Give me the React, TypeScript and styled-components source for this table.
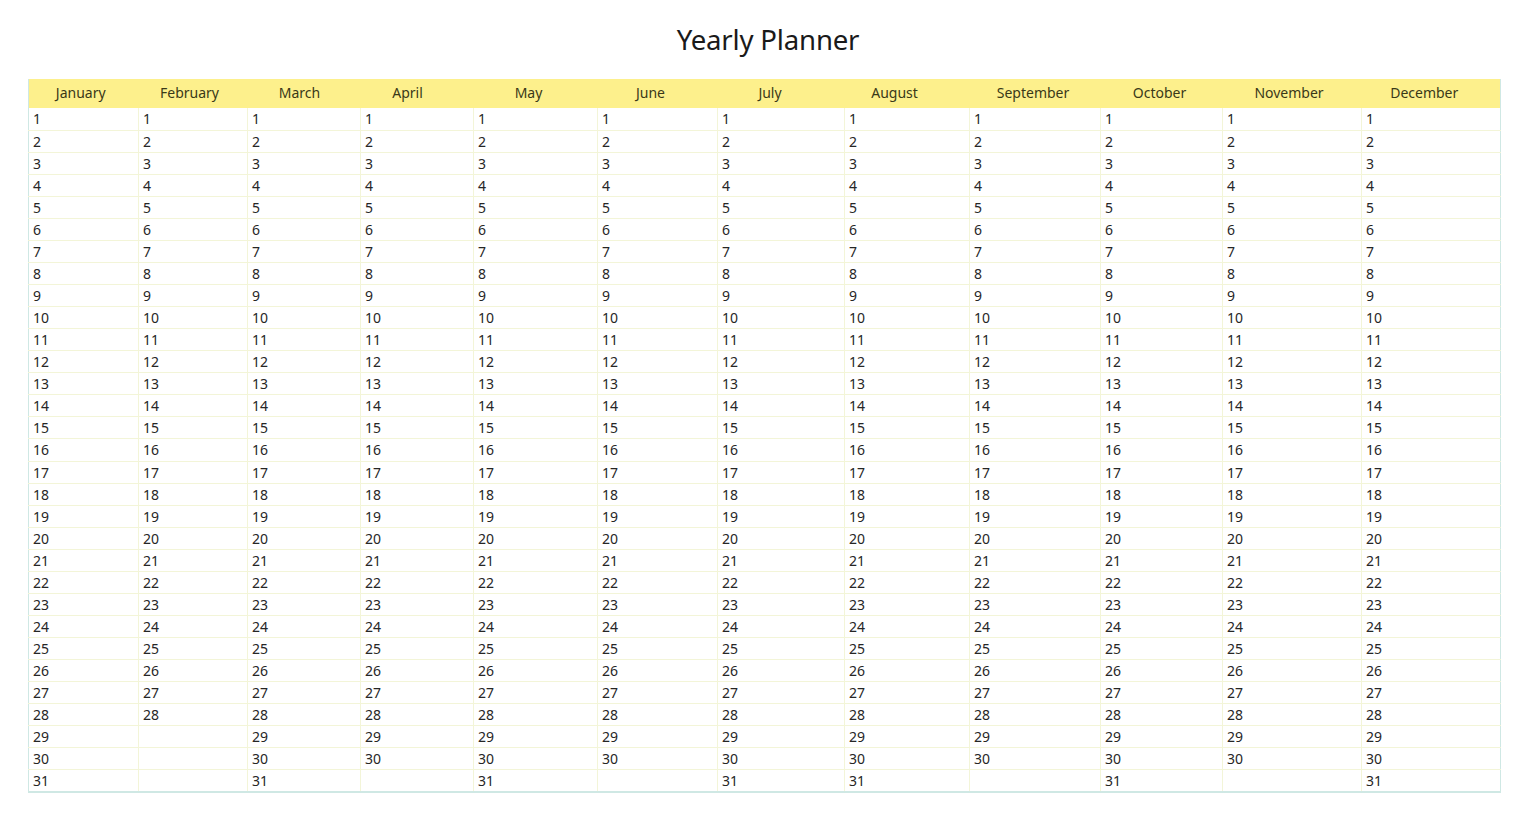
import React from "react";
import styled, { createGlobalStyle } from "styled-components";

const GlobalStyle = createGlobalStyle`
  * {
    box-sizing: border-box;
  }
  body {
    margin: 0;
    background: #ffffff;
    font-family: "Noto Sans", "Open Sans", sans-serif;
    color: #222222;
  }
`;

// shift = how far the header label sits left of the column centre
const months = [
  { name: "January", days: 31, width: 110, shift: 3 },
  { name: "February", days: 28, width: 109, shift: 3.5 },
  { name: "March", days: 31, width: 113, shift: 4.5 },
  { name: "April", days: 30, width: 113, shift: 9.5 },
  { name: "May", days: 31, width: 124, shift: 7 },
  { name: "June", days: 30, width: 120, shift: 7 },
  { name: "July", days: 31, width: 127, shift: 11 },
  { name: "August", days: 31, width: 125, shift: 12.5 },
  { name: "September", days: 30, width: 131, shift: 2 },
  { name: "October", days: 31, width: 122, shift: 2 },
  { name: "November", days: 30, width: 139, shift: 3 },
  { name: "December", days: 31, width: 139, shift: 6.5 },
];

const rows = Array.from({ length: 31 }, (_, i) => i + 1);

const App = () => {
  return (
    <>
      <GlobalStyle />
      <Page>
        <Title>Yearly Planner</Title>
        <Planner>
          <colgroup>
            {months.map((m) => (
              <Col key={m.name} $width={m.width} />
            ))}
          </colgroup>
          <thead>
            <tr>
              {months.map((m) => (
                <HeadCell key={m.name} $shift={m.shift}>
                  {m.name}
                </HeadCell>
              ))}
            </tr>
          </thead>
          <tbody>
            {rows.map((day) => (
              <tr key={day}>
                {months.map((m) => (
                  <DayCell key={m.name}>{day <= m.days ? day : ""}</DayCell>
                ))}
              </tr>
            ))}
          </tbody>
        </Planner>
      </Page>
    </>
  );
};

export default App;

const Page = styled.main`
  padding: 19px 36px 0 28px;
  display: flex;
  flex-direction: column;
  align-items: flex-start;
`;

const Title = styled.h1`
  align-self: stretch;
  margin: 0 0 20px;
  padding-left: 8px;
  text-align: center;
  font-size: 27.6px;
  font-weight: 400;
  line-height: 40px;
  color: #1a1a1a;
  letter-spacing: -0.2px;
`;

const Planner = styled.table`
  border-collapse: collapse;
  table-layout: fixed;
  width: 1472px;
  border-left: 1px solid #cfe8e4;
  border-right: 1px solid #cfe8e4;
  border-bottom: 2px solid #cfe8e4;
  font-size: 14px;
`;

const Col = styled.col<{ $width: number }>`
  width: ${(p) => p.$width}px;
`;

const HeadCell = styled.th<{ $shift: number }>`
  background: #fdf08c;
  color: #3a3918;
  font-weight: 400;
  height: 29px;
  padding: 0 ${(p) => p.$shift * 2}px 3px 0;
  text-align: center;
  vertical-align: middle;
  white-space: nowrap;
`;

const DayCell = styled.td`
  height: 22.07px;
  padding: 1px 0 0 4px;
  border-right: 1px solid #f3f5d8;
  border-bottom: 1px solid #f3f5d8;
  line-height: 20px;
  vertical-align: middle;
  color: #262626;

  &:last-child {
    border-right: none;
  }
`;
